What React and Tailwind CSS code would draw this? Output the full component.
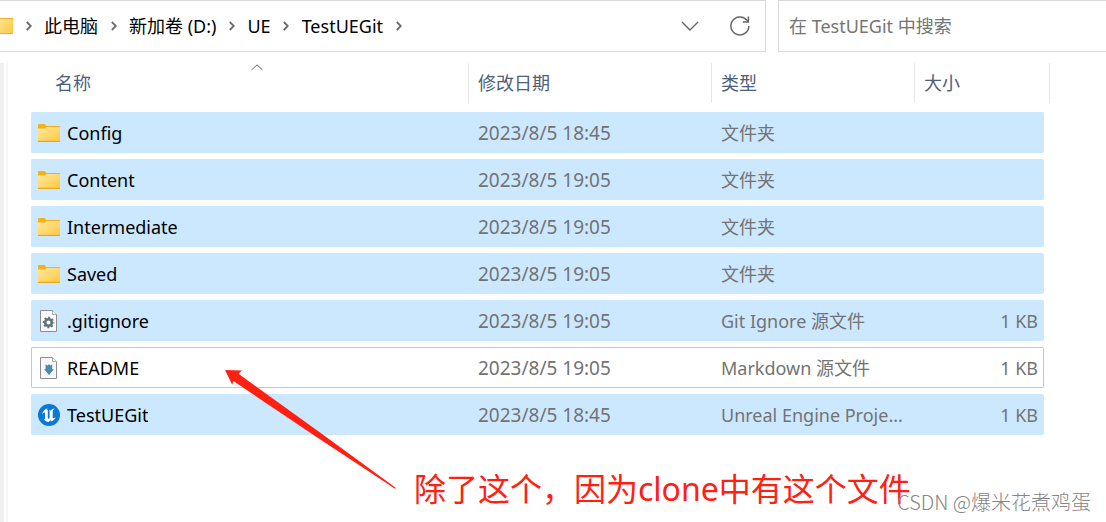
import React, { useState } from 'react';

const files = [
  { name: 'Config', date: '2023/8/5 18:45', type: '文件夹', size: '', icon: 'folder' },
  { name: 'Content', date: '2023/8/5 19:05', type: '文件夹', size: '', icon: 'folder' },
  { name: 'Intermediate', date: '2023/8/5 19:05', type: '文件夹', size: '', icon: 'folder' },
  { name: 'Saved', date: '2023/8/5 19:05', type: '文件夹', size: '', icon: 'folder' },
  { name: '.gitignore', date: '2023/8/5 19:05', type: 'Git Ignore 源文件', size: '1 KB', icon: 'config' },
  { name: 'README', date: '2023/8/5 19:05', type: 'Markdown 源文件', size: '1 KB', icon: 'markdown' },
  { name: 'TestUEGit', date: '2023/8/5 18:45', type: 'Unreal Engine Proje...', size: '1 KB', icon: 'unreal' },
];

const path = ['此电脑', '新加卷 (D:)', 'UE', 'TestUEGit'];

function FolderIcon() {
  return (
    <svg width="22" height="18" viewBox="0 0 22 18" className="block">
      <defs>
        <linearGradient id="folder" x1="0" y1="0" x2="1" y2="1">
          <stop offset="0" stopColor="#ffe8a0" />
          <stop offset="1" stopColor="#ffc83c" />
        </linearGradient>
      </defs>
      <path d="M0 1.2Q0 0 1.2 0H6.6L8.4 2H22V6H0Z" fill="#f5b113" />
      <path d="M0 4.4H7L8.6 3H22V18H0Z" fill="url(#folder)" />
      <path d="M0 16.8H22V18H0Z" fill="#eaa71c" />
    </svg>
  );
}

function PageShape({ children }) {
  return (
    <svg width="18" height="22" viewBox="0 0 18 22" className="block">
      <path d="M.5.5H12.5L16.5 4.5V21.5H.5Z" fill="#f9f9f9" stroke="#8c8c8c" />
      <path d="M12.5.5V4.5H16.5" fill="#fff" stroke="#a8a8a8" />
      {children}
    </svg>
  );
}

function FileIcon({ kind }) {
  if (kind === 'folder') return <FolderIcon />;
  if (kind === 'config') {
    return (
      <PageShape>
        <g fill="none" stroke="#5f7077">
          <circle cx="8.5" cy="12.5" r="3.3" strokeWidth="2.5" />
          <circle cx="8.5" cy="12.5" r="5" strokeWidth="1.6" strokeDasharray="2 1.927" strokeDashoffset="1" />
        </g>
      </PageShape>
    );
  }
  if (kind === 'markdown') {
    return (
      <PageShape>
        <path d="M5.6 7.3L7.4 8.6L9 7.3L10.6 8.6L12.2 7.3V12.2H14L9 18L4 12.2H5.6Z" fill="#4a8aaa" />
      </PageShape>
    );
  }
  return (
    <svg width="22" height="22" viewBox="0 0 22 22" className="block">
      <circle cx="11" cy="11" r="11" fill="#0b78d4" />
      <path
        d="M9.8 4.2C7 5 4.6 7.2 4 10.6C5 9 6 8.3 6.6 8.5C7 8.6 7 9 7 9.6V14.2C7 15.2 6.4 15.4 5.8 15.3C7 17 8.8 17.8 10.6 17.9L12.3 16.3L13.7 17.4C15.6 16.5 17 15 17.8 13C16.8 13.9 15.6 14.6 15 14.2C14.7 14 14.7 13.7 14.7 13.3V7.8C14.7 6.7 15.6 5.4 16.8 4.6C15 4.8 13.4 5.6 12.2 6.8C11.8 6.4 11.4 6.3 11 6.3C11.5 6.8 11.6 7.3 11.6 8V14C11.3 14.5 10.8 14.8 10.3 14.7C9.9 14.6 9.8 14.2 9.8 13.7V6.8C9.8 6 9.2 5.3 8.5 5.2Z"
        fill="#fff"
      />
    </svg>
  );
}

function Chevron() {
  return (
    <span className="flex w-[31px] shrink-0 justify-center">
      <svg width="6" height="10" viewBox="0 0 6 10" fill="none" stroke="#6a6a6a" strokeWidth="1.8">
        <path d="M.8 1L4.8 5L.8 9" />
      </svg>
    </span>
  );
}

function AddressBar() {
  const [query, setQuery] = useState('');

  return (
    <div className="flex h-[52px] gap-3 text-[18px]">
      <div className="flex min-w-0 flex-1 items-center border border-l-0 border-[#d9d9d9]">
        <span className="flex w-[13px] shrink-0 justify-end overflow-hidden">
          <svg width="13" height="16" viewBox="0 0 13 16" className="block">
            <defs>
              <linearGradient id="crumb" x1="0" y1="0" x2="1" y2="1">
                <stop offset="0" stopColor="#ffe396" />
                <stop offset="1" stopColor="#ffc83c" />
              </linearGradient>
            </defs>
            <path d="M0 0H13V16H0Z" fill="url(#crumb)" />
            <path d="M0 .5H13M0 15.5H13" stroke="#eeb02c" />
          </svg>
        </span>
        <Chevron />
        <nav className="flex min-w-0 flex-1 items-center whitespace-nowrap text-black">
          {path.map((p) => (
            <React.Fragment key={p}>
              <button type="button">{p}</button>
              <Chevron />
            </React.Fragment>
          ))}
        </nav>
        <button type="button" aria-label="展开" className="flex h-full w-[50px] items-center justify-center">
          <svg width="18" height="10" viewBox="0 0 18 10" fill="none" stroke="#666" strokeWidth="1.4">
            <path d="M1 1L9 9L17 1" />
          </svg>
        </button>
        <button type="button" aria-label="刷新" className="flex h-full w-[50px] items-center justify-center">
          <svg width="20" height="20" viewBox="0 0 20 20" fill="none" stroke="#666" strokeWidth="1.5">
            <path d="M18.9 10A9 9 0 1 1 16.8 4.1L18.3 5.8" />
            <path d="M18.4 .5V6.1H12.8" />
          </svg>
        </button>
      </div>
      <input
        type="text"
        aria-label="搜索"
        placeholder="在 TestUEGit 中搜索"
        value={query}
        onChange={(e) => setQuery(e.target.value)}
        className="w-[328px] border border-r-0 border-[#d9d9d9] px-[10px] text-black outline-none placeholder:text-[#757575]"
      />
    </div>
  );
}

function FileRow({ file, selected, onToggle }) {
  const cell = selected ? 'border-y border-[#cce8ff] bg-[#cce8ff]' : 'border-y border-[#99d1ff] bg-white';

  return (
    <tr onClick={onToggle} aria-selected={selected} className="h-[41px]">
      <td className={`${cell} rounded-l-[2px] border-l pl-[6px]`}>
        <div className="flex items-center gap-[7px]">
          <span className="flex w-[22px] shrink-0 justify-center">
            <FileIcon kind={file.icon} />
          </span>
          <span className="truncate text-black">{file.name}</span>
        </div>
      </td>
      <td className={`${cell} pl-[9px] text-[19px]`}>{file.date}</td>
      <td className={`${cell} pl-[9px]`}>{file.type}</td>
      <td className={`${cell} rounded-r-[2px] border-r pr-[5px] text-right`}>{file.size}</td>
    </tr>
  );
}

function FileTable() {
  const [open, setOpen] = useState(['README']);

  const toggle = (name) => {
    setOpen(open.includes(name) ? open.filter((n) => n !== name) : [...open, name]);
  };

  const head = 'flex h-[40px] w-full items-center border-r border-[#e5e5e5] pl-[9px] font-normal';

  return (
    <table className="w-full table-fixed border-separate border-spacing-x-0 border-spacing-y-[6px] text-[18px] leading-6 whitespace-nowrap text-[#737373]">
      <colgroup>
        <col />
        <col className="w-[243px]" />
        <col className="w-[203px]" />
        <col className="w-[129px]" />
        <col className="w-[6px]" />
      </colgroup>
      <thead>
        <tr className="h-[43px] align-top text-[#4c607a]">
          <th className="p-0 pl-[15px]">
            <button type="button" className={`${head} relative`}>
              名称
              <svg width="12" height="7" viewBox="0 0 12 7" fill="none" stroke="#6a6a6a" className="absolute top-px left-1/2 -translate-x-1/2">
                <path d="M.5 6L6 .8L11.5 6" />
              </svg>
            </button>
          </th>
          <th className="p-0">
            <button type="button" className={head}>修改日期</button>
          </th>
          <th className="p-0">
            <button type="button" className={head}>类型</button>
          </th>
          <th colSpan={2} className="p-0">
            <button type="button" className={head}>大小</button>
          </th>
        </tr>
      </thead>
      <tbody>
        {files.map((file) => (
          <FileRow
            key={file.name}
            file={file}
            selected={!open.includes(file.name)}
            onToggle={() => toggle(file.name)}
          />
        ))}
      </tbody>
    </table>
  );
}

export default function App() {
  return (
    <div className="relative flex min-h-screen flex-col overflow-hidden bg-white font-['Noto_Sans','Noto_Sans_CJK_SC',sans-serif]">
      <AddressBar />

      <div className="flex flex-1">
        {/* Edge of the navigation pane */}
        <div className="mt-[11px] mr-[23px] flex w-2 shrink-0 justify-between">
          <div className="w-1 bg-[#f0f0f0]" />
          <div className="w-[2px] bg-[#f7f7f7]" />
        </div>
        <div className="min-w-0 flex-1 pt-[5px] pr-14">
          <FileTable />
        </div>
      </div>

      {/* Annotation */}
      <svg width="172" height="120" viewBox="0 0 172 120" className="pointer-events-none absolute top-[369px] left-[224px]">
        <path d="M1 1L18 1.4L14.5 4.8L96 63.5L172 119L171 119.8L91 67L9.4 12L8.2 15.8Z" fill="#ff2012" />
      </svg>
      <p className="pointer-events-none absolute top-[466px] left-[414px] text-[32px] leading-[46px] whitespace-nowrap text-[#ff2012]">
        除了这个，因为clone中有这个文件
      </p>
      <p className="pointer-events-none absolute right-[15px] bottom-[5px] font-['Noto_Sans_CJK_SC',sans-serif] text-[20px] leading-[30px] font-light whitespace-nowrap text-[#858585]">
        CSDN @爆米花煮鸡蛋
      </p>
    </div>
  );
}
